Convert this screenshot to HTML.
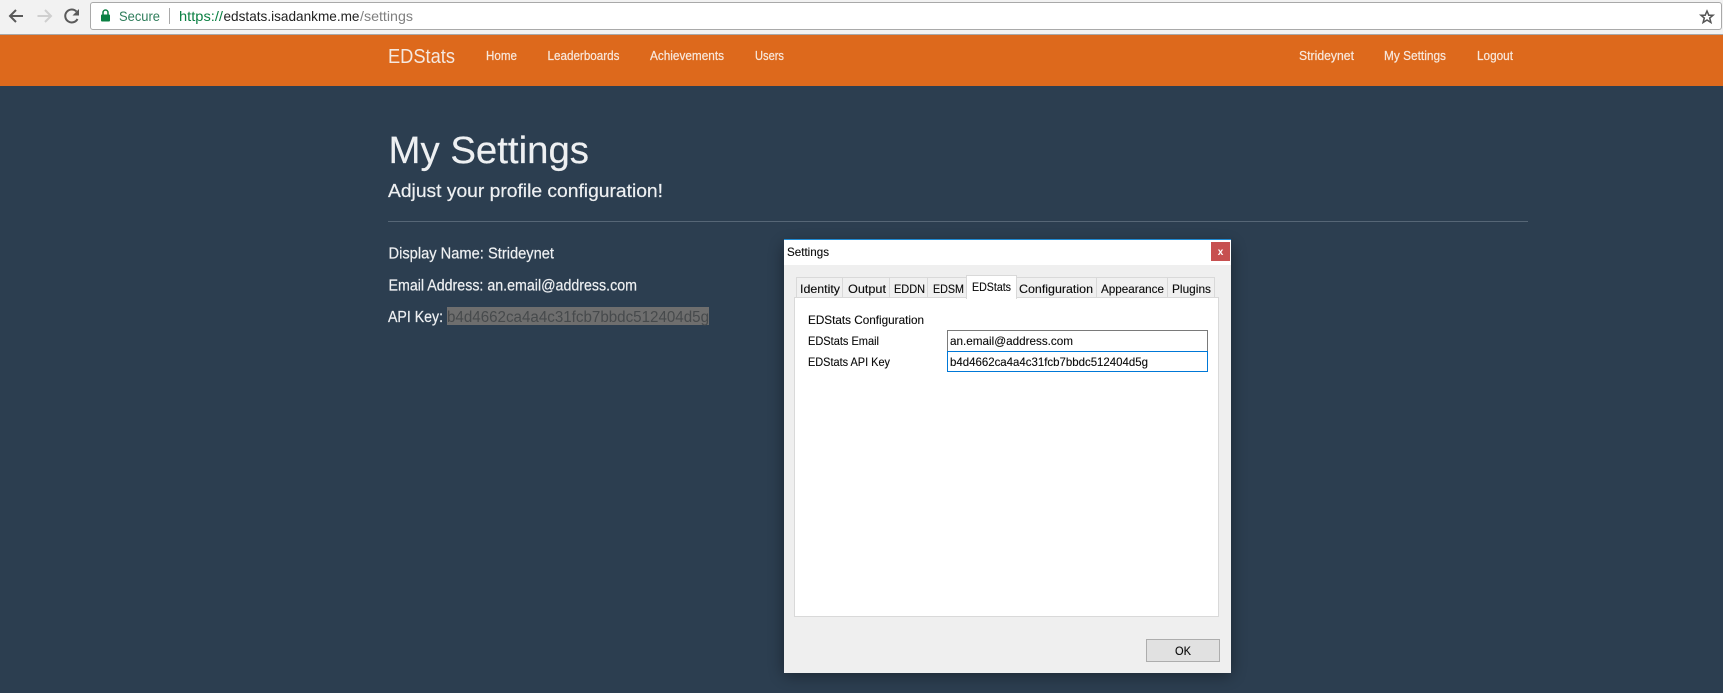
<!DOCTYPE html>
<html><head><meta charset="utf-8"><title>EDStats</title>
<style>
html,body{margin:0;padding:0;width:1723px;height:693px;overflow:hidden;background:#2c3e50}
svg{display:block;position:absolute;left:0;top:0}
text{font-family:"Liberation Sans",sans-serif}
.d{font-size:12px;fill:#0a0a0a;stroke:#0a0a0a;stroke-width:.12px}
.w{fill:#eef0f2;stroke:#eef0f2;stroke-width:.2px}
.n{font-size:12.5px;fill:#f8e8dc;stroke:#f8e8dc;stroke-width:.2px}
</style></head><body>
<svg width="1723" height="693" viewBox="0 0 1723 693" xmlns="http://www.w3.org/2000/svg">
<defs><filter id="s" x="-10%" y="-10%" width="120%" height="120%"><feGaussianBlur stdDeviation="8"/></filter></defs>
<rect width="1723" height="693" fill="#2c3e50"/>
<!-- toolbar -->
<rect width="1723" height="34" fill="#f2f2f2"/>
<rect y="34" width="1723" height="1" fill="#a8a8a8"/>
<rect x="90.5" y="2.5" width="1631" height="27" rx="2.5" fill="#fff" stroke="#a9a9a9"/>
<path d="M23 16H10.5M16 10L10 16L16 22" fill="none" stroke="#5a5a5a" stroke-width="2"/>
<path d="M37.500 16H50M45 10L51 16L45 22" fill="none" stroke="#cfcfcf" stroke-width="2"/>
<path d="M77.500 19A6.500 6.500 0 1 1 76.500 11.500" fill="none" stroke="#5a5a5a" stroke-width="2"/>
<path d="M79 9V15.500H72.500Z" fill="#5a5a5a"/>
<rect x="101" y="14.500" width="9" height="7" rx="1" fill="#0b8043"/>
<path d="M103 15V12.500A2.500 2.500 0 0 1 108 12.500V15" fill="none" stroke="#0b8043" stroke-width="1.500"/>
<text x="119" y="21" font-size="14" fill="#2f7d5b" textLength="41" lengthAdjust="spacingAndGlyphs">Secure</text>
<rect x="169" y="8" width="1" height="16" fill="#a9a9a9"/>
<text x="179" y="21" font-size="14" fill="#0b8043" textLength="44" lengthAdjust="spacingAndGlyphs">https://</text>
<text x="223.500" y="21" font-size="14" fill="#222" textLength="136" lengthAdjust="spacingAndGlyphs">edstats.isadankme.me</text>
<text x="360" y="21" font-size="14" fill="#808080" textLength="53" lengthAdjust="spacingAndGlyphs">/settings</text>
<path d="M1707 11L1708.800 15.200H1713L1709.700 18L1710.900 22.500L1707 20L1703.100 22.500L1704.300 18L1701 15.200H1705.200Z" fill="none" stroke="#555" stroke-width="1.500"/>
<!-- navbar -->
<rect y="35" width="1723" height="51" fill="#dd691c"/>
<text x="388" y="63" font-size="20" fill="#f5e8df" textLength="67" lengthAdjust="spacingAndGlyphs">EDStats</text>
<text class="n" x="486" y="60" textLength="31" lengthAdjust="spacingAndGlyphs">Home</text>
<text class="n" x="547.500" y="60" textLength="72" lengthAdjust="spacingAndGlyphs">Leaderboards</text>
<text class="n" x="650" y="60" textLength="74" lengthAdjust="spacingAndGlyphs">Achievements</text>
<text class="n" x="755" y="60" textLength="29" lengthAdjust="spacingAndGlyphs">Users</text>
<text class="n" x="1299" y="60" textLength="55" lengthAdjust="spacingAndGlyphs">Strideynet</text>
<text class="n" x="1384" y="60" textLength="62" lengthAdjust="spacingAndGlyphs">My Settings</text>
<text class="n" x="1477" y="60" textLength="36" lengthAdjust="spacingAndGlyphs">Logout</text>
<!-- page -->
<text class="w" x="388.500" y="163" font-size="38" textLength="200.500" lengthAdjust="spacingAndGlyphs">My Settings</text>
<text class="w" x="388" y="197" font-size="18.500" textLength="275" lengthAdjust="spacingAndGlyphs">Adjust your profile configuration!</text>
<rect x="388" y="221" width="1140" height="1" fill="#566676"/>
<text class="w" x="388.500" y="258.500" font-size="15.500" textLength="165.500" lengthAdjust="spacingAndGlyphs">Display Name: Strideynet</text>
<text class="w" x="388.500" y="290.500" font-size="15.500" textLength="248.500" lengthAdjust="spacingAndGlyphs">Email Address: an.email@address.com</text>
<text class="w" x="388" y="322" font-size="15.500" textLength="55" lengthAdjust="spacingAndGlyphs">API Key:</text>
<rect x="447" y="307" width="262" height="18" fill="#6e6e6e"/>
<text x="447" y="322" font-size="15.500" fill="#474a4c" textLength="262" lengthAdjust="spacingAndGlyphs">b4d4662ca4a4c31fcb7bbdc512404d5g</text>
<!-- dialog -->
<rect x="784" y="245" width="447" height="430" fill="#000" opacity=".4" filter="url(#s)"/>
<rect x="784" y="239" width="447" height="434" fill="#efefef"/>
<rect x="784" y="240" width="447" height="25" fill="#fff"/>
<rect x="784" y="239" width="447" height="1" fill="#1f8ad2"/>
<text class="d" x="787" y="256" textLength="42" lengthAdjust="spacingAndGlyphs">Settings</text>
<rect x="1211" y="242" width="19" height="19" fill="#c75050"/>
<text x="1220.500" y="255" font-size="10" font-weight="bold" fill="#fff" text-anchor="middle">x</text>
<!-- tabs -->
<g fill="#f0f0f0" stroke="#d9d9d9">
<rect x="796.500" y="277.500" width="46" height="20"/>
<rect x="842.500" y="277.500" width="47" height="20"/>
<rect x="889.500" y="277.500" width="38" height="20"/>
<rect x="927.500" y="277.500" width="39" height="20"/>
<rect x="1016.500" y="277.500" width="80" height="20"/>
<rect x="1096.500" y="277.500" width="71" height="20"/>
<rect x="1167.500" y="277.500" width="47" height="20"/>
</g>
<rect x="794.500" y="297.500" width="424" height="319" fill="#fff" stroke="#d9d9d9"/>
<rect x="966.500" y="275.500" width="50" height="23" fill="#fff" stroke="#d9d9d9"/>
<rect x="967" y="296" width="49" height="3" fill="#fff"/>
<text class="d" x="800" y="293" textLength="40" lengthAdjust="spacingAndGlyphs">Identity</text>
<text class="d" x="848" y="293" textLength="38" lengthAdjust="spacingAndGlyphs">Output</text>
<text class="d" x="894" y="293" textLength="31" lengthAdjust="spacingAndGlyphs">EDDN</text>
<text class="d" x="933" y="293" textLength="31" lengthAdjust="spacingAndGlyphs">EDSM</text>
<text class="d" x="972" y="291" textLength="39" lengthAdjust="spacingAndGlyphs">EDStats</text>
<text class="d" x="1019" y="293" textLength="74" lengthAdjust="spacingAndGlyphs">Configuration</text>
<text class="d" x="1101" y="293" textLength="63" lengthAdjust="spacingAndGlyphs">Appearance</text>
<text class="d" x="1172" y="293" textLength="39" lengthAdjust="spacingAndGlyphs">Plugins</text>
<!-- fields -->
<text class="d" x="808" y="324" textLength="116" lengthAdjust="spacingAndGlyphs">EDStats Configuration</text>
<text class="d" x="808" y="345" textLength="71" lengthAdjust="spacingAndGlyphs">EDStats Email</text>
<text class="d" x="808" y="366" textLength="82" lengthAdjust="spacingAndGlyphs">EDStats API Key</text>
<rect x="947.500" y="330.500" width="260" height="21" fill="#fff" stroke="#7a7a7a"/>
<rect x="947.500" y="351.500" width="260" height="20" fill="#fff" stroke="#0078d7"/>
<text class="d" x="950" y="345" textLength="123" lengthAdjust="spacingAndGlyphs">an.email@address.com</text>
<text class="d" x="950" y="366" textLength="198" lengthAdjust="spacingAndGlyphs">b4d4662ca4a4c31fcb7bbdc512404d5g</text>
<!-- ok -->
<rect x="1146.500" y="639.500" width="73" height="22" fill="#e1e1e1" stroke="#adadad"/>
<text class="d" x="1175" y="655" textLength="16" lengthAdjust="spacingAndGlyphs">OK</text>
</svg>
</body></html>
